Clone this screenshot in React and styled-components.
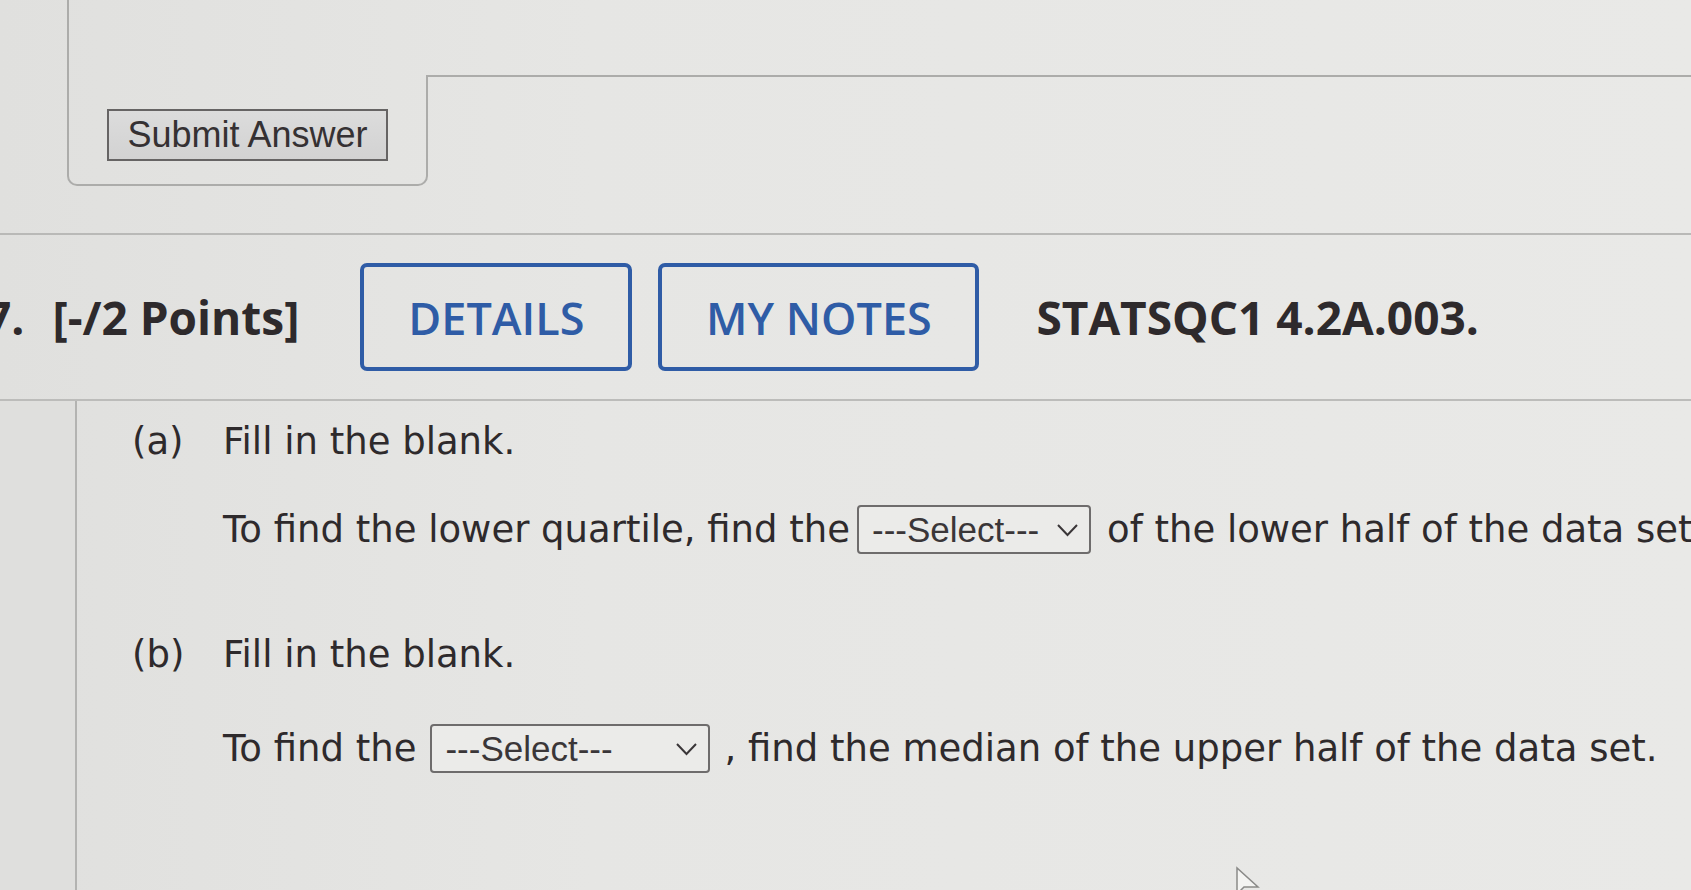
import styled, { createGlobalStyle } from "styled-components";

const GlobalStyle = createGlobalStyle`
  html, body {
    margin: 0;
    padding: 0;
    width: 1691px;
    height: 890px;
    overflow: hidden;
    background: #e4e4e2;
  }
`;

const Page = styled.div`
  position: relative;
  width: 1691px;
  height: 890px;
  overflow: hidden;
  background: linear-gradient(90deg, #e0e0de 0%, #e6e6e4 35%, #e9e9e7 100%);
  color: #2e2a2c;
`;

const TopSection = styled.div`
  display: flex;
  height: 233px;
  padding-left: 67px;
  border-bottom: 2px solid #b9b9b7;
`;

const PrevCard = styled.div`
  display: flex;
  width: 361px;
  height: 186px;
`;

const PrevCardBody = styled.div`
  flex: 1;
  padding: 109px 0 0 38px;
  border-left: 2px solid #acacaa;
  border-bottom: 2px solid #acacaa;
  border-bottom-left-radius: 10px;
`;

const PrevCardEdge = styled.div`
  width: 10px;
  margin-top: 75px;
  border-right: 2px solid #acacaa;
  border-bottom: 2px solid #acacaa;
  border-bottom-right-radius: 10px;
`;

const NextPanel = styled.div`
  flex: 1;
  margin-top: 75px;
  border-top: 2px solid #acacaa;
`;

const SubmitButton = styled.button`
  display: flex;
  align-items: center;
  justify-content: center;
  width: 281px;
  height: 52px;
  padding: 0;
  border: 2px solid #666464;
  background: linear-gradient(180deg, #dcdcdc 0%, #d2d2d2 100%);
  font-family: "Liberation Sans", Arial, sans-serif;
  font-size: 36px;
  color: #353133;
`;

const QuestionHeader = styled.div`
  display: flex;
  align-items: center;
  height: 164px;
  border-bottom: 2px solid #bcbcba;
  font-family: "Open Sans", sans-serif;
  white-space: nowrap;
`;

const QNumber = styled.span`
  margin-left: -15px;
  margin-right: 28px;
  font-size: 46px;
  font-weight: 700;
`;

const Points = styled.span`
  font-size: 46px;
  font-weight: 700;
`;

const OutlineButton = styled.button`
  display: flex;
  align-items: center;
  justify-content: center;
  width: ${(p) => p.$w}px;
  height: 108px;
  margin-left: ${(p) => p.$gap}px;
  padding: 0;
  border: 4px solid #2f5ca6;
  border-radius: 7px;
  background: transparent;
  font-family: "Open Sans", sans-serif;
  font-size: 45px;
  font-weight: 600;
  color: #2f5ca6;
`;

const QuestionId = styled.span`
  margin-left: 57px;
  font-size: 46px;
  font-weight: 700;
`;

const QuestionBody = styled.div`
  display: flex;
  height: 500px;
`;

const Gutter = styled.div`
  width: 75px;
  border-right: 2px solid #b3b3b1;
  background: #dfdfdd;
`;

const Parts = styled.div`
  flex: 1;
  min-width: 0;
  padding: 17px 0 0 55px;
  font-family: "DejaVu Sans", Verdana, sans-serif;
  font-size: 37px;
  line-height: 48px;
  white-space: nowrap;
`;

const Part = styled.div`
  margin-bottom: ${(p) => p.$after || 0}px;
`;

const PartHead = styled.div`
  display: flex;
`;

const PartLabel = styled.span`
  width: 91px;
`;

const Sentence = styled.div`
  margin: ${(p) => p.$top}px 0 0 91px;
  display: flex;
  align-items: center;
`;

const Dropdown = styled.div`
  display: flex;
  flex-shrink: 0;
  align-items: center;
  justify-content: space-between;
  box-sizing: border-box;
  width: ${(p) => p.$w}px;
  height: 49px;
  margin: ${(p) => `0 ${p.$right}px 0 ${p.$left}px`};
  padding: 0 10px 0 13px;
  border: 2px solid #6e6c6c;
  border-radius: 4px;
  background: #ebebe9;
  font-family: "Liberation Sans", Arial, sans-serif;
  font-size: 35px;
  color: #3a3638;
`;

const Cursor = styled.svg`
  position: absolute;
  left: 1234px;
  top: 866px;
`;

const Chevron = () => (
  <svg width="23" height="14" viewBox="0 0 23 14">
    <polyline points="2,2 11.5,12 21,2" fill="none" stroke="#3a3638" strokeWidth="2" />
  </svg>
);

const Select = ({ w, left, right }) => (
  <Dropdown $w={w} $left={left} $right={right}>
    <span>---Select---</span>
    <Chevron />
  </Dropdown>
);

export default function App() {
  return (
    <Page>
      <GlobalStyle />
      <TopSection>
        <PrevCard>
          <PrevCardBody>
            <SubmitButton>Submit Answer</SubmitButton>
          </PrevCardBody>
          <PrevCardEdge />
        </PrevCard>
        <NextPanel />
      </TopSection>

      <QuestionHeader>
        <QNumber>7.</QNumber>
        <Points>[-/2 Points]</Points>
        <OutlineButton $w={272} $gap={61}>DETAILS</OutlineButton>
        <OutlineButton $w={321} $gap={26}>MY NOTES</OutlineButton>
        <QuestionId>STATSQC1 4.2A.003.</QuestionId>
      </QuestionHeader>

      <QuestionBody>
        <Gutter />
        <Parts>
          <Part $after={77}>
            <PartHead>
              <PartLabel>(a)</PartLabel>
              <span>Fill in the blank.</span>
            </PartHead>
            <Sentence $top={39}>
              To find the lower quartile, find the
              <Select w={234} left={7} right={16} />
              of the lower half of the data set.
            </Sentence>
          </Part>
          <Part>
            <PartHead>
              <PartLabel>(b)</PartLabel>
              <span>Fill in the blank.</span>
            </PartHead>
            <Sentence $top={45}>
              To find the
              <Select w={280} left={14} right={14} />
              , find the median of the upper half of the data set.
            </Sentence>
          </Part>
        </Parts>
      </QuestionBody>

      <Cursor width="30" height="30" viewBox="0 0 30 30">
        <path d="M3 2 L3 28 L10 21 L24 21 Z" fill="#f4f4f2" stroke="#8a8a88" strokeWidth="1.5" />
      </Cursor>
    </Page>
  );
}
